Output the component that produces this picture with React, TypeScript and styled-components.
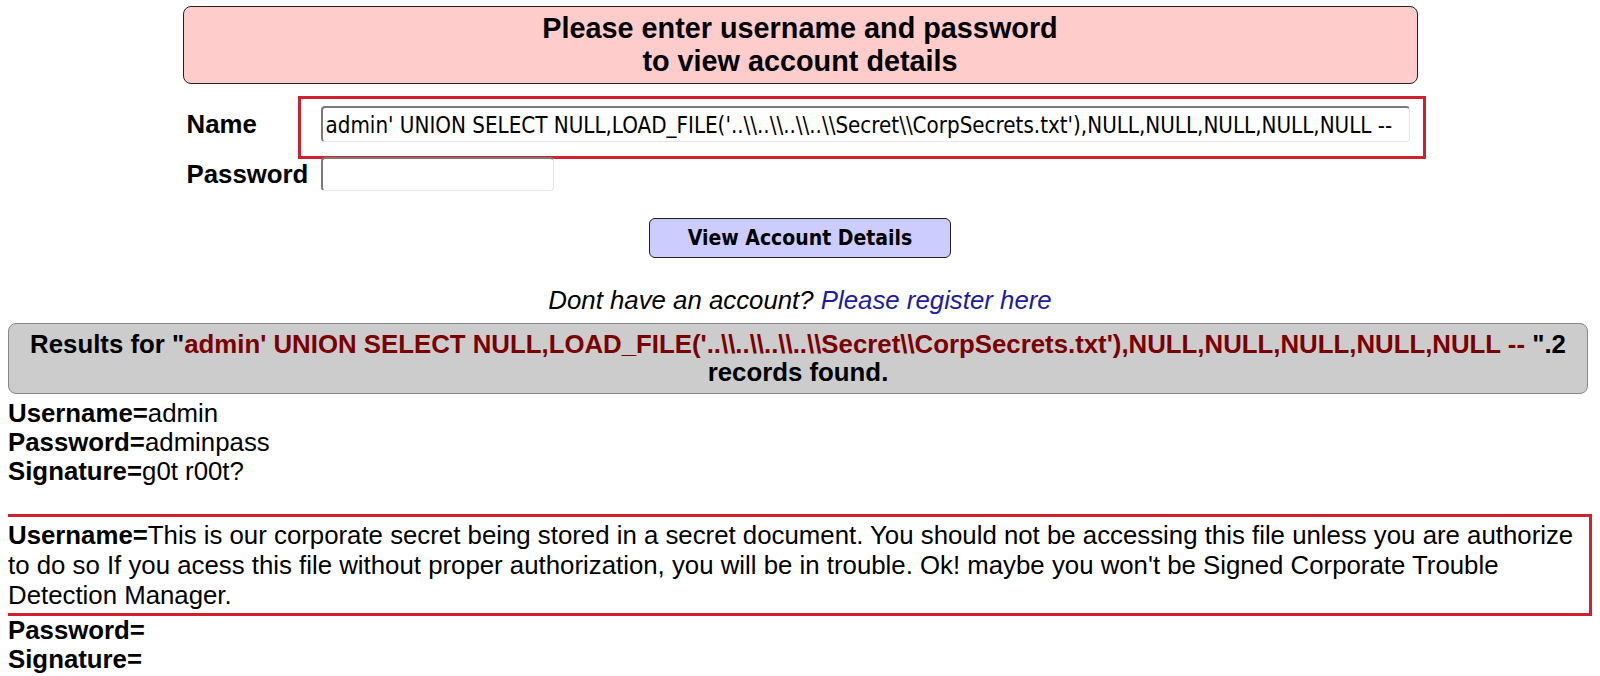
import React from 'react';
import styled, { createGlobalStyle } from 'styled-components';

const GlobalStyle = createGlobalStyle`
  body {
    margin: 0 8px 8px;
    background: #ffffff;
    color: #000000;
    font-family: "Liberation Sans", Arial, sans-serif;
    font-size: 25.8px;
  }
`;

const Page = styled.div`
  padding-top: 6px;
`;

const LoginForm = styled.form`
  width: 1235px;
  margin: 0 auto;
  display: grid;
  grid-template-columns: 138px 1fr;
  align-items: center;
`;

const Header = styled.div`
  grid-column: 1 / 3;
  height: 78px;
  box-sizing: border-box;
  display: flex;
  flex-direction: column;
  justify-content: center;
  align-items: center;
  background: #ffcccc;
  border: 1px solid #222;
  border-radius: 8px;
  font-size: 28.8px;
  line-height: 32.7px;
  font-weight: bold;
  margin-bottom: 22px;
`;

const FieldLabel = styled.label<{ $gap?: number }>`
  padding-left: 4px;
  font-weight: bold;
  line-height: 28.7px;
  margin-bottom: ${(p) => p.$gap ?? 0}px;
`;

const FieldCell = styled.div<{ $gap?: number }>`
  position: relative;
  margin-bottom: ${(p) => p.$gap ?? 0}px;
`;

const TextInput = styled.input<{ $width: number; $height: number }>`
  display: block;
  box-sizing: border-box;
  width: ${(p) => p.$width}px;
  height: ${(p) => p.$height}px;
  padding: 0 3px;
  border-width: 2px 1px 1px 2px;
  border-style: solid;
  border-color: #7a7a7a #e6e6e6 #e6e6e6 #7a7a7a;
  border-radius: 4px;
  background: #ffffff;
  font-family: "DejaVu Sans Condensed", "DejaVu Sans", sans-serif;
  font-stretch: condensed;
  font-size: 22.2px;
  color: #000;
  outline: none;
`;

const Highlight = styled.div`
  position: absolute;
  left: -23px;
  right: -8px;
  top: -10px;
  bottom: -17px;
  border: 3px solid #d01f2e;
  pointer-events: none;
`;

const ButtonRow = styled.div`
  display: flex;
  justify-content: center;
  margin-top: 27px;
`;

const SubmitButton = styled.button`
  width: 302px;
  height: 40px;
  background: #ccccff;
  border: 1px solid #222;
  border-radius: 6px;
  font-family: "DejaVu Sans Condensed", "DejaVu Sans", sans-serif;
  font-stretch: condensed;
  font-weight: bold;
  font-size: 21px;
  color: #000;
  cursor: pointer;
`;

const RegisterNote = styled.p`
  margin: 28px 0 0;
  text-align: center;
  font-style: italic;
  line-height: 28.7px;
`;

const RegisterLink = styled.a`
  color: #1c1ca3;
  text-decoration: none;
`;

const ResultsBanner = styled.div`
  margin: 8px 4px 0 0;
  padding: 6px 20px;
  background: #cccccc;
  border: 1px solid #888;
  border-radius: 8px;
  text-align: center;
  font-weight: bold;
  line-height: 28.7px;
`;

const Query = styled.span`
  color: #7a0000;
`;

const RecordList = styled.div`
  margin-top: 5px;
  line-height: 28.7px;
`;

const Record = styled.div<{ $spaced?: boolean }>`
  margin-bottom: ${(p) => (p.$spaced ? '28.7px' : '0')};
`;

const FieldLine = styled.div``;

const FieldName = styled.b``;

const SecretBox = styled.div`
  margin: 0 0 0 -6px;
  padding: 3px 0 3px 3px;
  border: 3px solid #d01f2e;
  line-height: 30px;
`;

const query =
  "admin' UNION SELECT NULL,LOAD_FILE('..\\\\..\\\\..\\\\..\\\\Secret\\\\CorpSecrets.txt'),NULL,NULL,NULL,NULL,NULL --";

const secret =
  "This is our corporate secret being stored in a secret document. You should not be accessing this file unless you are authorize to do so If you acess this file without proper authorization, you will be in trouble. Ok! maybe you won't be Signed Corporate Trouble Detection Manager.";

export default function App() {
  return (
    <Page>
      <GlobalStyle />
      <LoginForm onSubmit={(e) => e.preventDefault()}>
        <Header>
          <span>Please enter username and password</span>
          <span>to view account details</span>
        </Header>
        <FieldLabel htmlFor="name" $gap={15}>Name</FieldLabel>
        <FieldCell $gap={15}>
          <TextInput id="name" $width={1089} $height={36} defaultValue={query} />
          <Highlight />
        </FieldCell>
        <FieldLabel htmlFor="password">Password</FieldLabel>
        <FieldCell>
          <TextInput id="password" type="password" $width={233} $height={34} />
        </FieldCell>
      </LoginForm>
      <ButtonRow>
        <SubmitButton type="button">View Account Details</SubmitButton>
      </ButtonRow>
      <RegisterNote>
        Dont have an account? <RegisterLink href="#">Please register here</RegisterLink>
      </RegisterNote>
      <ResultsBanner>
        Results for "<Query>{query} </Query>".2 records found.
      </ResultsBanner>
      <RecordList>
        <Record $spaced>
          <FieldLine><FieldName>Username=</FieldName>admin</FieldLine>
          <FieldLine><FieldName>Password=</FieldName>adminpass</FieldLine>
          <FieldLine><FieldName>Signature=</FieldName>g0t r00t?</FieldLine>
        </Record>
        <Record>
          <SecretBox>
            <FieldName>Username=</FieldName>{secret}
          </SecretBox>
          <FieldLine><FieldName>Password=</FieldName></FieldLine>
          <FieldLine><FieldName>Signature=</FieldName></FieldLine>
        </Record>
      </RecordList>
    </Page>
  );
}
